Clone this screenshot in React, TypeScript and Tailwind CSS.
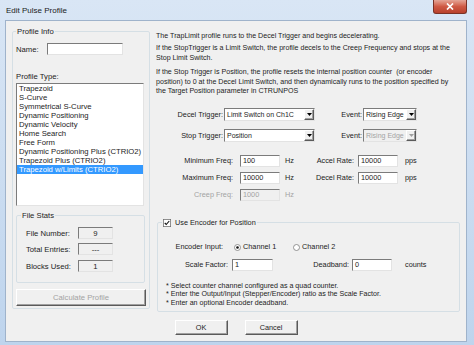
import React from 'react';

const sunken =
    'border border-t-[#7b7b7b] border-l-[#7b7b7b] border-r-[#e3e3e3] border-b-[#e3e3e3]';
const raised =
    'border border-t-white border-l-white border-r-[#5a5a5a] border-b-[#5a5a5a] shadow-[inset_-1px_-1px_0_#a0a0a0]';

type FieldProps = { value: string; className?: string; disabled?: boolean };

const Edit = ({ value, className = '', disabled }: FieldProps) => (
    <div
        className={`${sunken} flex h-[12px] items-center pl-[2px] ${
            disabled ? 'bg-[#f0f0f0] text-[#a3a3a3]' : 'bg-white'
        } ${className}`}
    >
        {value}
    </div>
);

const DropArrow = ({ disabled }: { disabled?: boolean }) => (
    <div
        className={`${raised} flex h-full w-[10px] shrink-0 items-center justify-center bg-[#f0f0f0]`}
    >
        <svg width="5" height="3" viewBox="0 0 5 3">
            <path d="M0 0h5L2.5 3z" fill={disabled ? '#a0a0a0' : '#000'} />
        </svg>
    </div>
);

const Select = ({ value, className = '', disabled }: FieldProps) => (
    <div
        className={`${sunken} flex h-[13px] items-stretch ${
            disabled ? 'bg-[#f0f0f0] text-[#a3a3a3]' : 'bg-white'
        } ${className}`}
    >
        <div className="flex flex-1 items-center overflow-hidden whitespace-nowrap pl-[2px] text-[7px]">
            {value}
        </div>
        <DropArrow disabled={disabled} />
    </div>
);

const Radio = ({ checked }: { checked?: boolean }) => (
    <svg width="7" height="7" viewBox="0 0 14 14">
        <circle cx="7" cy="7" r="6" fill="white" stroke="#7b7b7b" strokeWidth="1.6" />
        {checked ? <circle cx="7" cy="7" r="2.6" fill="#111" /> : null}
    </svg>
);

const Check = () => (
    <svg width="8" height="8" viewBox="0 0 16 16">
        <rect x="0.75" y="0.75" width="14.5" height="14.5" fill="white" stroke="#6d6d6d" strokeWidth="1.5" />
        <path d="M3.5 8l3 3 6-7" fill="none" stroke="#111" strokeWidth="2.2" />
    </svg>
);

const profileTypes = [
    'Trapezoid',
    'S-Curve',
    'Symmetrical S-Curve',
    'Dynamic Positioning',
    'Dynamic Velocity',
    'Home Search',
    'Free Form',
    'Dynamic Positioning Plus (CTRIO2)',
    'Trapezoid Plus (CTRIO2)',
    'Trapezoid w/Limits (CTRIO2)',
];

const fileStats = [
    { label: 'File Number:', value: '9', mt: 'mt-[7px]' },
    { label: 'Total Entries:', value: '---', mt: 'mt-[4px]' },
    { label: 'Blocks Used:', value: '1', mt: 'mt-[5px]' },
];

export default function App() {
    return (
        <div className="flex h-[345px] w-[474px] flex-col overflow-hidden bg-gradient-to-b from-[#d9e6f5] to-[#bed4ed] font-['Liberation_Sans',Arial,sans-serif] text-[7.3px] leading-[9px] text-[#1c1c1c]">
            {/* title bar */}
            <div className="flex h-[20px] shrink-0 items-start">
                <span className="mt-[6px] pl-[6px] text-[8px] leading-[10px] text-[#1b1b1b]">
                    Edit Pulse Profile
                </span>
                <div className="ml-auto mr-[7px] flex h-[14px] w-[34px] items-center justify-center rounded-b-[3px] border border-t-0 border-[#7a3226] bg-gradient-to-b from-[#e4a597] via-[#cf5a45] to-[#b8412c]">
                    <svg width="8" height="7" viewBox="0 0 8 7">
                        <path d="M1 0.5l6 6M7 0.5l-6 6" stroke="white" strokeWidth="1.7" />
                    </svg>
                </div>
            </div>

            {/* client */}
            <div className="flex flex-1 pb-[3px] pl-[5px] pr-[7px]">
                <div className="flex flex-1 flex-col border border-[#9fb3cb] bg-[#f0f0f0]">
                    <div className="flex pl-[6px] pt-[6px]">
                        {/* left: profile info */}
                        <fieldset className="h-[282px] w-[138px] shrink-0 rounded-[2px] border border-[#d5dfe5] px-[3px] text-[7.7px]">
                            <legend className="px-[1px] leading-[9px]">Profile Info</legend>
                            <div className="mt-[7px] flex h-[12px] items-center">
                                <span className="w-[31px]">Name:</span>
                                <Edit value="" className="w-[76px]" />
                            </div>
                            <div className="mt-[17px]">Profile Type:</div>
                            <div className={`${sunken} mt-[2px] h-[123px] w-[128px] bg-white`}>
                                {profileTypes.map((t, i) => (
                                    <div
                                        key={t}
                                        className={`whitespace-nowrap pl-[2px] ${
                                            i === profileTypes.length - 1
                                                ? 'bg-[#3399ff] text-white'
                                                : ''
                                        }`}
                                    >
                                        {t}
                                    </div>
                                ))}
                            </div>
                            <fieldset className="mt-[5px] h-[72px] w-[129px] rounded-[2px] border border-[#d5dfe5] pl-[4px]">
                                <legend className="px-[1px] leading-[9px]">File Stats</legend>
                                {fileStats.map((s) => (
                                    <div key={s.label} className={`${s.mt} flex h-[12px] items-center`}>
                                        <span className="ml-[5px] w-[52px]">{s.label}</span>
                                        <div
                                            className={`${sunken} flex h-[12px] w-[35px] items-center justify-center bg-[#f0f0f0]`}
                                        >
                                            {s.value}
                                        </div>
                                    </div>
                                ))}
                            </fieldset>
                            <div
                                className={`${raised} mt-[6px] flex h-[17px] w-[130px] items-center justify-center bg-[#f0f0f0] text-[#a3a3a3]`}
                            >
                                Calculate Profile
                            </div>
                        </fieldset>

                        {/* right: settings */}
                        <div className="ml-[6px] w-[306px] leading-[9.5px]">
                            <p className="mt-[4.5px] whitespace-nowrap text-[7.1px]">
                                The TrapLimit profile runs to the Decel Trigger and begins decelerating.
                            </p>
                            <p className="mt-[3.25px] whitespace-nowrap text-[7.1px]">
                                If the StopTrigger is a Limit Switch, the profile decels to the Creep Frequency and stops at the
                                <br />
                                Stop Limit Switch.
                            </p>
                            <p className="mt-[5px] whitespace-nowrap text-[7.1px]">
                                If the Stop Trigger is Position, the profile resets the internal position counter&nbsp; (or encoder
                                <br />
                                position) to 0 at the Decel Limit Switch, and then dynamically runs to the position specified by
                                <br />
                                the Target Position parameter in CTRUNPOS
                            </p>

                            <div className="mt-[11.25px] flex h-[13px] items-center">
                                <span className="w-[67px] text-right">Decel Trigger:</span>
                                <Select value="Limit Switch on Ch1C" className="ml-[1px] w-[91px]" />
                                <span className="w-[47px] text-right">Event:</span>
                                <Select value="Rising Edge" className="ml-[1px] w-[54px]" />
                            </div>
                            <div className="mt-[8px] flex h-[13px] items-center">
                                <span className="w-[67px] text-right">Stop Trigger:</span>
                                <Select value="Position" className="ml-[1px] w-[91px]" />
                                <span className="w-[47px] text-right">Event:</span>
                                <Select value="Rising Edge" className="ml-[1px] w-[54px]" disabled />
                            </div>

                            <div className="mt-[13px] flex h-[12px] items-center">
                                <span className="w-[77px] text-right">Minimum Freq:</span>
                                <Edit value="100" className="ml-[7px] w-[40px]" />
                                <span className="ml-[5px] w-[30px]">Hz</span>
                                <span className="w-[39px] text-right">Accel Rate:</span>
                                <Edit value="10000" className="ml-[4px] w-[40px]" />
                                <span className="ml-[7px]">pps</span>
                            </div>
                            <div className="mt-[5px] flex h-[12px] items-center">
                                <span className="w-[77px] text-right">Maximum Freq:</span>
                                <Edit value="10000" className="ml-[7px] w-[40px]" />
                                <span className="ml-[5px] w-[30px]">Hz</span>
                                <span className="w-[39px] text-right">Decel Rate:</span>
                                <Edit value="10000" className="ml-[4px] w-[40px]" />
                                <span className="ml-[7px]">pps</span>
                            </div>
                            <div className="mt-[5px] flex h-[12px] items-center text-[#a3a3a3]">
                                <span className="w-[77px] text-right">Creep Freq:</span>
                                <Edit value="1000" className="ml-[7px] w-[40px]" disabled />
                                <span className="ml-[5px]">Hz</span>
                            </div>

                            <fieldset className="ml-[1px] mt-[17px] h-[94px] w-[303px] rounded-[2px] border border-[#d5dfe5] pl-[4px] leading-[8.5px]">
                                <legend className="flex items-center gap-[4px] px-[1px] leading-[9px]">
                                    <Check />
                                    <span>Use Encoder for Position</span>
                                </legend>
                                <div className="mt-[14px] flex h-[12px] items-center">
                                    <span className="w-[61px] text-right">Encoder Input:</span>
                                    <span className="ml-[11px] flex items-center">
                                        <Radio checked />
                                    </span>
                                    <span className="ml-[2px] w-[50px]">Channel 1</span>
                                    <Radio />
                                    <span className="ml-[2px]">Channel 2</span>
                                </div>
                                <div className="mt-[6px] flex h-[12px] items-center">
                                    <span className="w-[66px] text-right">Scale Factor:</span>
                                    <Edit value="1" className="ml-[4px] w-[41px]" />
                                    <span className="w-[76px] text-right">Deadband:</span>
                                    <Edit value="0" className="ml-[3px] w-[40px]" />
                                    <span className="ml-[13px]">counts</span>
                                </div>
                                <div className="ml-[4px] mt-[10.75px] whitespace-nowrap text-[7.1px]">
                                    * Select counter channel configured as a quad counter.
                                    <br />
                                    * Enter the Output/Input (Stepper/Encoder) ratio as the Scale Factor.
                                    <br />
                                    * Enter an optional Encoder deadband.
                                </div>
                            </fieldset>
                        </div>
                    </div>

                    {/* dialog buttons */}
                    <div className="mt-[8px] flex justify-center gap-[17px]">
                        <div className={`${raised} flex h-[15px] w-[53px] items-center justify-center bg-[#f0f0f0]`}>
                            OK
                        </div>
                        <div className={`${raised} flex h-[15px] w-[53px] items-center justify-center bg-[#f0f0f0]`}>
                            Cancel
                        </div>
                    </div>
                </div>
            </div>
        </div>
    );
}
